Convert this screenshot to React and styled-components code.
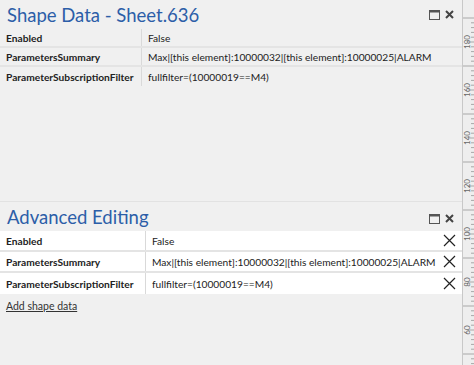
import React from 'react';
import styled, { createGlobalStyle } from 'styled-components';

const GlobalStyle = createGlobalStyle`
  html, body {
    margin: 0;
    padding: 0;
    background: #f0f0f0;
    font-family: Lato, "Noto Sans", sans-serif;
  }
`;

const Screen = styled.div`
  display: flex;
  width: 474px;
  height: 365px;
  overflow: hidden;
  background: #f0f0f0;
`;

const Main = styled.div`
  flex: 1;
  display: flex;
  flex-direction: column;
`;

const Panel = styled.section`
  display: flex;
  flex-direction: column;
  height: ${(p) => p.height}px;
  border-bottom: ${(p) => (p.divided ? '1px solid #e2e2e2' : 'none')};
  box-sizing: border-box;
`;

const Header = styled.div`
  display: flex;
  align-items: center;
  justify-content: space-between;
  height: ${(p) => p.height}px;
  padding: 0 8px 0 7px;
`;

const Title = styled.h1`
  margin: 0;
  font-size: 18.5px;
  font-weight: 400;
  color: #2c5ea8;
`;

const WindowButtons = styled.div`
  display: flex;
  align-items: center;
  gap: 5px;
  margin-top: ${(p) => p.offset || 0}px;
`;

const Table = styled.div`
  display: flex;
  flex-direction: column;
`;

const Row = styled.div`
  display: grid;
  grid-template-columns: ${(p) => p.label}px 1fr ${(p) => (p.removable ? '24px' : '')};
  height: ${(p) => p.height}px;
  background: ${(p) => (p.white ? '#ffffff' : 'transparent')};
  border-bottom: ${(p) => (p.last ? 'none' : '2px solid #e4e4e4')};
  box-sizing: border-box;
  font-size: 10.2px;
  color: #222;
`;

const Cell = styled.div`
  display: flex;
  align-items: center;
  padding-left: 6px;
  white-space: nowrap;
  overflow: hidden;
  font-weight: ${(p) => (p.bold ? 700 : 400)};
  border-right: ${(p) => (p.divider ? '1px solid #d9d9d9' : 'none')};
`;

const RemoveButton = styled.button`
  display: flex;
  align-items: center;
  justify-content: center;
  border: none;
  background: none;
  padding: 0;
  margin-right: 2px;
`;

const AddLink = styled.a`
  display: inline-block;
  margin: 6px 0 0 6px;
  font-size: 10.5px;
  color: #333;
  text-decoration: underline;
`;

const RulerStrip = styled.div`
  width: 12px;
  height: 365px;
  border-left: 1px solid #c8c8c8;
  background: #eeeeee;
  box-sizing: border-box;
`;

const rows = [
  { name: 'Enabled', value: 'False' },
  { name: 'ParametersSummary', value: 'Max|[this element]:10000032|[this element]:10000025|ALARM' },
  { name: 'ParameterSubscriptionFilter', value: 'fullfilter=(10000019==M4)' },
];

const MaxIcon = () => (
  <svg width="11" height="10" viewBox="0 0 11 10">
    <rect x="0.5" y="0.5" width="10" height="9" fill="none" stroke="#555" strokeWidth="1" />
    <rect x="0.5" y="0.5" width="10" height="2" fill="#555" />
  </svg>
);

const CloseSmall = () => (
  <svg width="9" height="9" viewBox="0 0 9 9">
    <path d="M1 1 L8 8 M8 1 L1 8" stroke="#444" strokeWidth="2" />
  </svg>
);

const CloseThin = () => (
  <svg width="13" height="13" viewBox="0 0 13 13">
    <path d="M1 1 L12 12 M12 1 L1 12" stroke="#222" strokeWidth="1.2" />
  </svg>
);

const Ruler = () => {
  const labels = [180, 160, 140, 120, 100, 80, 60];
  return (
    <RulerStrip>
      <svg width="11" height="365" viewBox="0 0 11 365">
        {Array.from({ length: 80 }).map((_, i) => {
          const y = 18 + i * 4.8;
          const major = i % 10 === 0;
          const mid = i % 5 === 0;
          return (
            <line key={i} x1={major ? 0 : mid ? 5 : 8} x2="11" y1={y} y2={y}
              stroke="#8a8a8a" strokeWidth="0.7" />
          );
        })}
        {labels.map((l, i) => (
          <text key={l} x="0" y="0" fontSize="8" fill="#666"
            fontFamily="Lato, sans-serif"
            transform={`translate(7 ${42 + i * 48}) rotate(-90)`} textAnchor="middle">
            {l}
          </text>
        ))}
      </svg>
    </RulerStrip>
  );
};

export default function App() {
  return (
    <Screen>
      <GlobalStyle />
      <Main>
        <Panel height={202} divided>
          <Header height={29}>
            <Title>Shape Data - Sheet.636</Title>
            <WindowButtons>
              <MaxIcon />
              <CloseSmall />
            </WindowButtons>
          </Header>
          <Table>
            {rows.map((r, i) => (
              <Row key={r.name} label={142} height={19} last={i === rows.length - 1}>
                <Cell bold divider>{r.name}</Cell>
                <Cell>{r.value}</Cell>
              </Row>
            ))}
          </Table>
        </Panel>
        <Panel height={163}>
          <Header height={29}>
            <Title>Advanced Editing</Title>
            <WindowButtons offset={4}>
              <MaxIcon />
              <CloseSmall />
            </WindowButtons>
          </Header>
          <Table>
            {rows.map((r, i) => (
              <Row key={r.name} label={146} height={21} white removable last={i === rows.length - 1}>
                <Cell bold divider>{r.name}</Cell>
                <Cell>{r.value}</Cell>
                <RemoveButton aria-label="remove">
                  <CloseThin />
                </RemoveButton>
              </Row>
            ))}
          </Table>
          <div>
            <AddLink href="#">Add shape data</AddLink>
          </div>
        </Panel>
      </Main>
      <Ruler />
    </Screen>
  );
}
